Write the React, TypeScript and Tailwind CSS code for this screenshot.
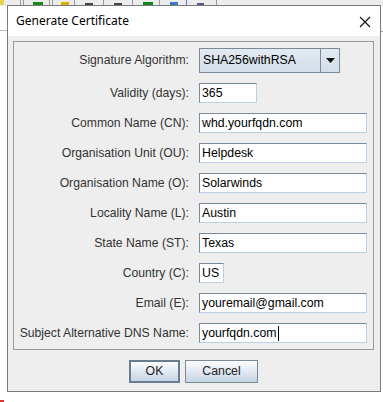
import React from "react";

const F = { fontFamily: '"Liberation Sans", Arial, sans-serif' };

function Field({ value, w, cursor }: { value: string; w: string; cursor?: boolean }) {
  return (
    <div
      className={`${w} h-[20px] bg-white border border-[#7a8a99] border-b-[#b8cfe5] border-r-[#b8cfe5] flex items-center pl-[2px] text-[12.3px] text-black leading-none`}
    >
      <span className="whitespace-nowrap">{value}</span>
      {cursor && <span className="w-px h-[15px] bg-black ml-[1px]" />}
    </div>
  );
}

function Row({ label, children }: { label: string; children: React.ReactNode }) {
  return (
    <div className="flex items-center">
      <div className="w-[184px] text-right text-[12.2px] text-[#333] pr-[10px] whitespace-nowrap leading-none">{label}</div>
      {children}
    </div>
  );
}

export default function App() {
  return (
    <div className="w-[383px] h-[402px] bg-white overflow-hidden relative" style={F}>
      {/* background app toolbar strip */}
      <div className="absolute left-0 top-0 w-[383px] h-[6px] bg-[#ececec] flex">
        <div className="w-[4px] h-[5px] bg-[#e8d24a]" />
        <div className="ml-[16px] w-px h-[5px] bg-[#999]" />
        <div className="ml-[2px] w-px h-[5px] bg-[#999]" />
        <div className="ml-[9px] w-[10px] h-[3px] bg-[#1a8a1a] mt-[2px]" />
        <div className="ml-[6px] w-px h-[5px] bg-[#999]" />
        <div className="ml-[2px] w-px h-[5px] bg-[#999]" />
        <div className="ml-[8px] w-[8px] h-[3px] bg-[#d8b000] mt-[2px]" />
        <div className="ml-[5px] w-px h-[5px] bg-[#999]" />
        <div className="ml-[10px] w-[8px] h-[2px] bg-[#444] mt-[3px]" />
        <div className="ml-[10px] w-px h-[5px] bg-[#999]" />
        <div className="ml-[10px] w-[8px] h-[2px] bg-[#444] mt-[3px]" />
        <div className="ml-[10px] w-px h-[5px] bg-[#999]" />
        <div className="ml-[10px] w-[10px] h-[3px] bg-[#118811] mt-[2px]" />
        <div className="ml-[6px] w-px h-[5px] bg-[#999]" />
        <div className="ml-[10px] w-[8px] h-[3px] bg-[#3a78c8] mt-[2px]" />
        <div className="ml-[8px] w-px h-[5px] bg-[#5577cc]" />
        <div className="ml-[10px] w-[7px] h-[2px] bg-[#555588] mt-[3px]" />
        <div className="ml-[12px] w-px h-[5px] bg-[#999]" />
      </div>
      <div className="absolute left-0 top-[30px] w-[7px] h-px bg-[#bbb]" />
      <div className="absolute left-[380px] top-[31px] w-[3px] h-px bg-[#999]" />

      {/* dialog window */}
      <div className="absolute left-[7px] top-[5px] w-[374px] h-[387px] border border-[#7a7a7a] bg-[#eeeeee] flex flex-col">
        <div className="h-[30px] bg-white flex items-center justify-between pl-[8px] pr-[9px]">
          <span className="text-[12px] text-black" style={{ fontFamily: '"Noto Sans", "Open Sans", sans-serif' }}>
            Generate Certificate
          </span>
          <svg width="12" height="12" viewBox="0 0 12 12" className="mt-[1px]">
            <path d="M1 1 L11 11 M11 1 L1 11" stroke="#111" strokeWidth="1.1" />
          </svg>
        </div>
        <div className="flex-1 flex flex-col pt-[5px] pl-[5px] pr-[6px]">
          <div className="border border-[#9a9a9a] h-[309px] pt-[6px] pl-[1px] flex flex-col gap-[10px]">
            <Row label="Signature Algorithm:">
              <div className="w-[141px] h-[25px] border border-[#7a8a99] bg-gradient-to-b from-[#e3eaf2] to-[#d3dde8] flex">
                <div className="flex-1 flex items-center pl-[3px] text-[12.3px] text-black leading-none">SHA256withRSA</div>
                <div className="w-[19px] border-l border-[#7a8a99] flex items-center justify-center">
                  <svg width="9" height="5" viewBox="0 0 9 5">
                    <path d="M0 0 H9 L4.5 5 Z" fill="#111" />
                  </svg>
                </div>
              </div>
            </Row>
            <div className="flex flex-col gap-[10px]">
              <Row label="Validity (days):"><Field value="365" w="w-[58px]" /></Row>
              <Row label="Common Name (CN):"><Field value="whd.yourfqdn.com" w="w-[168px]" /></Row>
              <Row label="Organisation Unit (OU):"><Field value="Helpdesk" w="w-[168px]" /></Row>
              <Row label="Organisation Name (O):"><Field value="Solarwinds" w="w-[168px]" /></Row>
              <Row label="Locality Name (L):"><Field value="Austin" w="w-[168px]" /></Row>
              <Row label="State Name (ST):"><Field value="Texas" w="w-[168px]" /></Row>
              <Row label="Country (C):"><Field value="US" w="w-[25px]" /></Row>
              <Row label="Email (E):"><Field value="youremail@gmail.com" w="w-[168px]" /></Row>
              <Row label="Subject Alternative DNS Name:"><Field value="yourfqdn.com" w="w-[168px]" cursor /></Row>
            </div>
          </div>
          <div className="flex justify-center gap-[5px] mt-[10px]">
            <button className="w-[51px] h-[23px] border-2 border-[#6a7c90] bg-gradient-to-b from-[#fbfcfd] to-[#c6d5e5] text-[12.3px] text-[#222] leading-none">
              OK
            </button>
            <button className="w-[73px] h-[23px] border border-[#7a8a99] bg-gradient-to-b from-[#fbfcfd] to-[#c6d5e5] text-[12.3px] text-[#222] leading-none">
              Cancel
            </button>
          </div>
        </div>
      </div>
      <div className="absolute left-0 bottom-[0px] w-[4px] h-[2px] bg-[#d33] " />
    </div>
  );
}
